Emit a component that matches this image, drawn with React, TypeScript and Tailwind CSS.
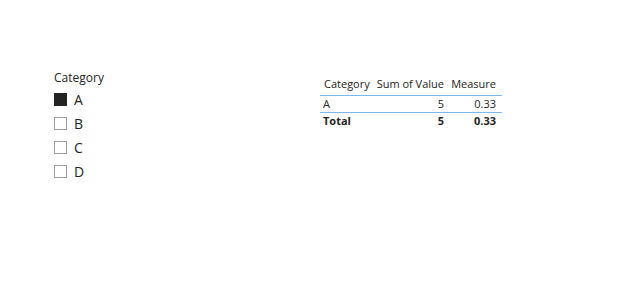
import React from "react";

const items = [
  { label: "A", checked: true },
  { label: "B", checked: false },
  { label: "C", checked: false },
  { label: "D", checked: false },
];

export default function App() {
  return (
    <div className="w-[617px] h-[299px] bg-white flex font-['Open_Sans',sans-serif] text-[#252423]">
      <div className="ml-[54px] mt-[70px] w-[266px] flex flex-col">
        <div className="text-[12px] leading-[16px] h-[19px]">Category</div>
        <div className="flex flex-col gap-[11px] mt-[4px]">
          {items.map((it) => (
            <div key={it.label} className="flex items-center h-[13px]">
              <div
                className={
                  it.checked
                    ? "w-[13px] h-[13px] bg-[#252423] border border-[#252423]"
                    : "w-[13px] h-[13px] bg-white border border-[#a19f9d]"
                }
              />
              <span className="ml-[7px] text-[14px] leading-[13px]">{it.label}</span>
            </div>
          ))}
        </div>
      </div>
      <div className="mt-[73px]">
        <table className="border-collapse text-[11px]">
          <thead>
            <tr className="h-[22px]">
              <th className="w-[55px] font-normal text-left pl-[4px] align-middle">Category</th>
              <th className="w-[73px] font-normal text-right pr-[4px] align-middle">Sum of Value</th>
              <th className="w-[54px] font-normal text-right pr-[6px] align-middle">Measure</th>
            </tr>
          </thead>
          <tbody>
            <tr className="h-[17px] border-t border-[#7fb8ee]">
              <td className="pl-[3px]">A</td>
              <td className="text-right pr-[4px]">5</td>
              <td className="text-right pr-[6px]">0.33</td>
            </tr>
            <tr className="h-[16px] border-t border-[#7fb8ee] font-bold">
              <td className="pl-[3px]">Total</td>
              <td className="text-right pr-[4px]">5</td>
              <td className="text-right pr-[6px]">0.33</td>
            </tr>
          </tbody>
        </table>
      </div>
    </div>
  );
}
